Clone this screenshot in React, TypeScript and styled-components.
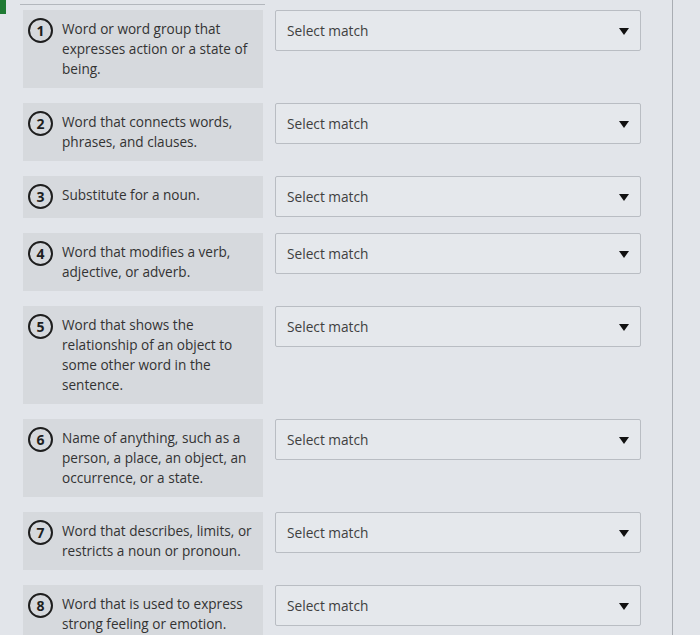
import React from "react";
import styled, { createGlobalStyle } from "styled-components";

const Global = createGlobalStyle`
  html, body {
    margin: 0;
    padding: 0;
    background: #e2e5ea;
    height: 635px;
    overflow: hidden;
  }
  body {
    font-family: "Open Sans", "Noto Sans", sans-serif;
    color: #333;
  }
`;

const Page = styled.div`
  position: relative;
  width: 673px;
  height: 635px;
  border-right: 1px solid #a9adb3;
  box-sizing: border-box;
  padding: 4px 0 0 23px;
`;

const Tab = styled.div`
  position: absolute;
  left: 0;
  top: 0;
  width: 6px;
  height: 14px;
  background: #1f7a33;
`;

const Rule = styled.div`
  width: 245px;
  height: 1px;
  margin-left: -3px;
  background: #b3b7bd;
`;

const List = styled.div`
  display: flex;
  flex-direction: column;
  gap: 15px;
  margin-top: 5px;
`;

const Row = styled.div`
  display: grid;
  grid-template-columns: 240px 366px;
  column-gap: 12px;
  align-items: start;
`;

const Prompt = styled.div`
  display: flex;
  align-items: flex-start;
  gap: 9px;
  background: #d6d9dd;
  padding: 9px 3px 9px 5px;
  font-size: 13.6px;
  line-height: 20px;
  color: #333;
`;

const Num = styled.span`
  flex: none;
  width: 25px;
  height: 25px;
  box-sizing: border-box;
  border: 2px solid #1e1e1e;
  border-radius: 50%;
  display: flex;
  align-items: center;
  justify-content: center;
  font-size: 14px;
  font-weight: 700;
  color: #1e1e1e;
  margin-top: -1px;
`;

const Text = styled.span`
  flex: 1;
`;

const Select = styled.div`
  height: 41px;
  box-sizing: border-box;
  border: 1px solid #b9bdc3;
  border-radius: 2px;
  background: #e5e8ec;
  display: flex;
  align-items: center;
  justify-content: space-between;
  padding: 0 11px 0 11px;
  font-size: 13.7px;
  color: #404040;
`;

const Arrow = styled.span`
  width: 0;
  height: 0;
  border-left: 5px solid transparent;
  border-right: 5px solid transparent;
  border-top: 7px solid #111;
  margin-top: 1px;
`;

const items = [
  "Word or word group that expresses action or a state of being.",
  "Word that connects words, phrases, and clauses.",
  "Substitute for a noun.",
  "Word that modifies a verb, adjective, or adverb.",
  "Word that shows the relationship of an object to some other word in the sentence.",
  "Name of anything, such as a person, a place, an object, an occurrence, or a state.",
  "Word that describes, limits, or restricts a noun or pronoun.",
  "Word that is used to express strong feeling or emotion.",
];

export default function App() {
  return (
    <>
      <Global />
      <Page>
        <Tab />
        <Rule />
        <List>
          {items.map((t, i) => (
            <Row key={i}>
              <Prompt>
                <Num>{i + 1}</Num>
                <Text>{t}</Text>
              </Prompt>
              <Select>
                <span>Select match</span>
                <Arrow />
              </Select>
            </Row>
          ))}
        </List>
      </Page>
    </>
  );
}
